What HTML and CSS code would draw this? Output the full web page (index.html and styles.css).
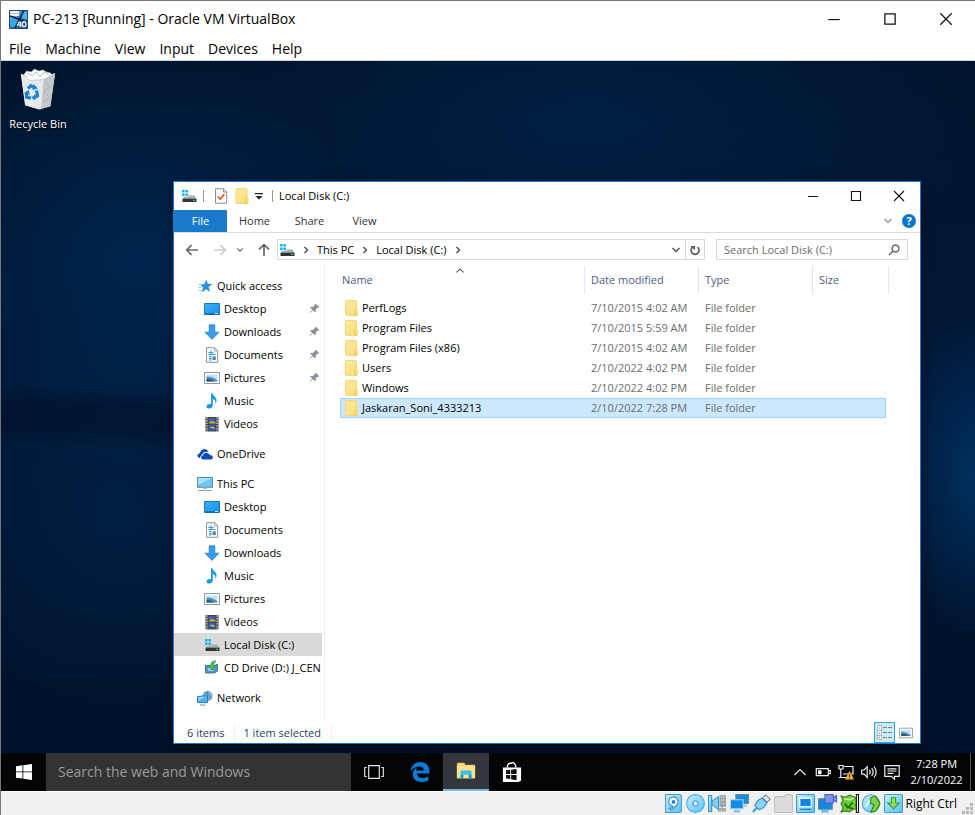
FILE: index.html
```html
<!DOCTYPE html>
<html lang="en">
<head>
<meta charset="utf-8">
<title>PC-213 [Running] - Oracle VM VirtualBox</title>
<link rel="stylesheet" href="styles.css">
</head>
<body>
<svg class="sprite" aria-hidden="true">
  <defs>
    <linearGradient id="g-sky" x1="0" y1="0" x2="1" y2="1"><stop offset="0" stop-color="#39b4f7"/><stop offset="1" stop-color="#1590ea"/></linearGradient>
    <linearGradient id="g-pale" x1="0" y1="0" x2="1" y2="1"><stop offset="0" stop-color="#c4f0ff"/><stop offset="1" stop-color="#55c2fb"/></linearGradient>
    <linearGradient id="g-folder" x1="0" y1="0" x2="1" y2="1"><stop offset="0" stop-color="#ffeaa0"/><stop offset="1" stop-color="#fbdc7c"/></linearGradient>
    <linearGradient id="g-vb" x1="0" y1="0" x2="1" y2="1"><stop offset="0" stop-color="#c8e4f4"/><stop offset=".45" stop-color="#2a8ad0"/><stop offset="1" stop-color="#123a6a"/></linearGradient>
  </defs>
  <symbol id="drive" viewBox="0 0 16 16">
    <path fill="#16b5f2" d="M1 2h2.600v2.600H1zM4.400 2H7v2.600H4.400zM1 5.400h2.600V8H1zM4.400 5.400H7V8H4.400z"/>
    <path fill="#a9adb0" d="M7.500 7.500h6l2 3.500h-14l1.500-2.300h4.500z"/>
    <path fill="#333638" d="M1.500 10.700h14v3.300h-14z"/>
    <path fill="#32d44b" d="M12 11.800h2v1.200h-2z"/>
  </symbol>
  <symbol id="folder" viewBox="0 0 13 16">
    <path fill="url(#g-folder)" stroke="#f3d573" d="M.5 1.500q0-1 1-1h9q1 0 1 1v8l1 1v4q0 1-1 1h-10q-1 0-1-1z"/>
    <path fill="none" stroke="#edc653" d="M12 15.300h-1.500q-.7 0-.7-1v-3.800q0-1 1-1"/>
  </symbol>
  <symbol id="check-doc" viewBox="0 0 14 16">
    <path fill="#fff" stroke="#8c8c8c" d="M1.500.8h8l3.200 3.200v11.200H1.500z"/>
    <path fill="none" stroke="#8c8c8c" d="M9.500 1v3h3"/>
    <path fill="none" stroke="#e8622c" stroke-width="1.800" d="M3.800 8.500l2.400 2.700 4.200-5"/>
  </symbol>
  <symbol id="star" viewBox="0 0 16 16">
    <path fill="#2592e0" d="M9.400 1.500l1.300 4.300 4.700.1-3.800 3 1.700 4.800-4.300-2.400-4.200 3.300 1.200-5.100-3-2.900 4.300-.4z"/>
    <path stroke="#7cc8f5" fill="none" d="M2 6.500h2.500M1.500 9.500h2.500M1.500 12.500h3"/>
  </symbol>
  <symbol id="desktop" viewBox="0 0 16 16">
    <path fill="url(#g-sky)" stroke="#1679c4" d="M.5 2.500h15v11H.5z"/>
    <path stroke="#0d5d9e" d="M1 12.900h14"/><path stroke="#c8ecff" d="M11 12.500h3"/>
  </symbol>
  <symbol id="down" viewBox="0 0 16 16"><path fill="#3b9be8" stroke="#2583d2" stroke-width=".8" d="M5.200.8h5.600v7.400h4.200L8 15.400.9 8.200h4.300z"/></symbol>
  <symbol id="doc" viewBox="0 0 16 16">
    <path fill="#fafafa" stroke="#8f959a" d="M2.500.7h8.200l3 3v11.600H2.500z"/><path fill="none" stroke="#8f959a" stroke-width=".8" d="M10.500 1v3h3"/>
    <path stroke="#2f97da" d="M4.500 5.500h5M4.500 7.500h7M5 9.500h2.500M5 11.500h2.500M5 13h2.500M7 3.500v4"/><path fill="#4a86b0" d="M8.500 9.500h3.300V13H8.500z"/>
  </symbol>
  <symbol id="picture" viewBox="0 0 16 16">
    <path fill="#fff" stroke="#8f959a" d="M.5 2.500h15v11H.5z"/><path fill="#bfe3fb" d="M2.500 4.500h11v4h-11z"/>
    <path fill="#4d8fc6" d="M2.500 6.500q5-.5 11 3.500v1.500h-11z"/><path fill="#2b5a56" d="M2.500 9q5-.5 8 2.500h-8z"/>
  </symbol>
  <symbol id="music" viewBox="0 0 16 16"><path fill="#1a96ea" d="M7 .5h1.800c.3 2.900 4.700 3.900 3.700 8.100-.3 1-.8 1.800-1.300 2.300.7-2.500-.2-4.200-2.400-5v6.300c0 2.100-1.900 3.400-3.900 3.300-1.700-.1-2.600-1.100-2.400-2.300.2-1.700 2.400-2.700 4.500-2z"/></symbol>
  <symbol id="video" viewBox="0 0 16 16">
    <path fill="#454545" d="M1.500 1h13v14.500h-13z"/><path stroke="#e5e5e5" stroke-width="1.300" stroke-dasharray="1.300 1.300" d="M2.900 1.500v14M13.100 1.500v14"/>
    <path fill="#2c5fb0" d="M4.500 2h7v5.500h-7z"/><path fill="#d8a52c" d="M5 6.500l3-1.500 3.500 1v1.500H5z"/><path fill="#c94a2e" d="M6 3h2v2H6z"/>
    <path fill="#2c5fb0" d="M4.500 8.700h7v5.800h-7z"/><path fill="#e0b440" d="M5 11.500l3-1 2.500 1v1.500L8 12.200z"/>
  </symbol>
  <symbol id="cloud" viewBox="0 0 16 16">
    <path fill="#0b4cb8" d="M3 12Q-.3 11.700.5 9.200 1 7.300 3 7.300 3.300 4 6.500 3.200q3.600-.7 5 2.600-5.300-.6-6.700 3.300Q3 10 3 12z"/>
    <path fill="#0b4cb8" d="M6 13.500q-2.200-.2-2-2.200.3-1.500 1.800-1.700Q6.500 6.700 9.300 6.700q2.400 0 3.400 2.400 3.200.2 3.200 2.400 0 2-2.300 2z"/>
  </symbol>
  <symbol id="pc" viewBox="0 0 16 16">
    <path fill="#6cc5f5" stroke="#5a8cae" d="M.5 1.500h15v9.800H.5z"/><path fill="#a8e0fc" d="M1 2h14L1 9z"/>
    <path fill="#8fa5b3" d="M6 11.500h4v1.200H6z"/><path stroke="#98a6b0" d="M1 14.500h14"/>
  </symbol>
  <symbol id="cd" viewBox="0 0 16 16">
    <path fill="#5b93c9" stroke="#46719c" d="M1.500 5.500h9l3-1.500v7l-3 2h-9z"/><path fill="#94c4e8" d="M4 8h5v3H4z"/>
    <path fill="#3cc04f" stroke="#218c33" stroke-width=".6" d="M12 1q-5-.8-5.400 4.600H4.300L8 10l3.700-4.400H9.500Q9.500 2.500 12 1z"/>
  </symbol>
  <symbol id="network" viewBox="0 0 16 16">
    <circle cx="10.500" cy="6" r="5.200" fill="#7fb2d2"/><path fill="none" stroke="#4b7fa5" d="M8 2q4 2 6 7M11 1q-2 4 0 9"/>
    <path fill="#46b3f0" stroke="#2f7fae" d="M.5 6.500l10-.8v7l-10-.2z"/><path fill="#8bd4fb" d="M1 7l8-.6L1 11z"/><path stroke="#78909c" d="M3 15h5"/>
  </symbol>
  <symbol id="pin" viewBox="0 0 12 12"><path fill="#87939b" d="M7.400.8l3.900 3.900-1.200.5-.5-.3-2.300 2.300.2 2.100-1 .8-2.300-2.300L1 11l-.5-.3 3-3.400L1.300 5l.8-.9 2.100.2 2.400-2.400-.1-.4z"/></symbol>
  <symbol id="chev-down" viewBox="0 0 10 10"><path fill="none" stroke="currentColor" stroke-width="1.500" d="M1.500 3L5 6.500 8.500 3"/></symbol>
  <symbol id="chev-right" viewBox="0 0 10 10"><path fill="none" stroke="currentColor" stroke-width="1.500" d="M3.500 2l3 3-3 3"/></symbol>
  <symbol id="chev-up" viewBox="0 0 10 10"><path fill="none" stroke="currentColor" stroke-width="1.200" d="M1 7l4-3.500L9 7"/></symbol>
  <symbol id="arrow" viewBox="0 0 14 14"><path fill="none" stroke="currentColor" stroke-width="1.700" d="M13 7H2M6.500 2L1.700 7l4.800 5"/></symbol>
  <symbol id="min" viewBox="0 0 14 14"><path stroke="#111" d="M2 7.500h10"/></symbol>
  <symbol id="max" viewBox="0 0 14 14"><path fill="none" stroke="#111" stroke-width="1.100" d="M2.500 2.500h9v9h-9z"/></symbol>
  <symbol id="close" viewBox="0 0 14 14"><path stroke="#111" stroke-width="1.100" d="M2 2l10 10M12 2L2 12"/></symbol>
</svg>

<div class="vm">
  <header class="vm-title">
    <svg class="vm-logo" viewBox="0 0 19 19" aria-hidden="true">
      <path fill="url(#g-vb)" stroke="#234763" d="M.5.5h18v18H.5z"/>
      <path fill="#eef6fa" d="M1 1h9v5H1z"/><path stroke="#6b8595" stroke-dasharray="1 1" d="M1.500 3.500h7"/>
      <path fill="#35a9ee" d="M2 8l7 2-3 7H2z"/><path fill="#4fb4ee" d="M15 2h3v8l-5-2z"/>
      <path stroke="#0b223c" stroke-width="1.600" d="M14.500 1L6 18M1 6l17 6"/>
      <path fill="none" stroke="#fff" stroke-width="1.200" d="M10.500 11.500l-2 3.500h4M11.500 12v5"/><ellipse cx="15.200" cy="14.300" rx="1.800" ry="2.700" fill="none" stroke="#fff" stroke-width="1.200"/>
    </svg>
    <h1>PC-213 [Running] - Oracle VM VirtualBox</h1>
    <div class="win-buttons vm-buttons">
      <button aria-label="Minimize"><svg><use href="#min"/></svg></button>
      <button aria-label="Maximize"><svg><use href="#max"/></svg></button>
      <button aria-label="Close"><svg><use href="#close"/></svg></button>
    </div>
  </header>
  <nav class="vm-menu" aria-label="Menu">
    <button>File</button><button>Machine</button><button>View</button><button>Input</button><button>Devices</button><button>Help</button>
  </nav>

  <main class="desktop">
    <a class="recycle" href="#">
      <svg viewBox="0 0 40 44" aria-hidden="true">
        <path fill="#dce1e4" d="M2 5l9 4h15l12-5-5 35-12 3.500L6.500 38z"/>
        <path fill="#c2c8cc" d="M26 9l12-5-5 35-10 3z"/>
        <path fill="#e6eaec" d="M2 5l9 4h15l-3 33.500L6.500 38z"/>
        <path fill="#f9fafa" stroke="#b5bcc1" stroke-width=".6" d="M5 6l3-4 5 1 3-3 5 2 4-1 4 2 4 1 2 2-9 5-15 1z"/>
        <path fill="none" stroke="#a4adb3" stroke-width=".8" d="M9 4l5 3 4-4 4 5 5-5 4 3M27 13l6 6-7 4 6 7-8 5"/>
        <g fill="none" stroke="#1b83d8" stroke-width="3.400"><path d="M9.500 20.500l3-3 4 2"/><path d="M18.500 22.500l1 5.500-3 2"/><path d="M12.500 30.500l-4.500-1 0-5"/></g>
        <path fill="#1b83d8" d="M15.500 16l4.500 4.500-6 1.500zM17 26.500v6.500l-4-3zM5 25.500l5-3.500 1.500 5z"/>
      </svg>
      <span>Recycle Bin</span>
    </a>

    <section class="explorer" aria-label="Local Disk (C:)">
      <header class="ex-title">
        <svg class="i16"><use href="#drive"/></svg><i class="bar"></i>
        <button aria-label="Properties"><svg class="i16"><use href="#check-doc"/></svg></button>
        <button aria-label="New folder"><svg class="i16"><use href="#folder"/></svg></button>
        <button aria-label="Customize" class="qa"><svg viewBox="0 0 8 8"><path fill="#222" d="M0 1h8v1.300H0zM.5 4h7L4 7.500z"/></svg></button>
        <i class="bar"></i>
        <h2>Local Disk (C:)</h2>
        <div class="win-buttons ex-buttons">
          <button aria-label="Minimize"><svg><use href="#min"/></svg></button>
          <button aria-label="Maximize"><svg><use href="#max"/></svg></button>
          <button aria-label="Close"><svg><use href="#close"/></svg></button>
        </div>
      </header>
      <nav class="ribbon" aria-label="Ribbon">
        <button class="file">File</button><button>Home</button><button>Share</button><button>View</button>
        <button class="expand" aria-label="Expand ribbon"><svg class="i10"><use href="#chev-down"/></svg></button>
        <button class="help" aria-label="Help">?</button>
      </nav>
      <div class="nav-row">
        <div class="arrows">
          <button aria-label="Back"><svg><use href="#arrow"/></svg></button>
          <button aria-label="Forward" class="fwd"><svg><use href="#arrow"/></svg></button>
          <button aria-label="Recent"><svg class="i8"><use href="#chev-down"/></svg></button>
          <button aria-label="Up" class="up"><svg><use href="#arrow"/></svg></button>
        </div>
        <div class="address">
          <svg class="i16"><use href="#drive"/></svg>
          <svg class="i10"><use href="#chev-right"/></svg><a href="#">This PC</a>
          <svg class="i10"><use href="#chev-right"/></svg><a href="#">Local Disk (C:)</a>
          <svg class="i10"><use href="#chev-right"/></svg>
          <button class="drop" aria-label="Previous locations"><svg class="i10"><use href="#chev-down"/></svg></button>
          <button class="refresh" aria-label="Refresh"><svg viewBox="0 0 12 12"><path fill="none" stroke="currentColor" stroke-width="1.600" d="M3.500 3.300A4 4 0 1 0 8.500 3.200M2 2.700h3.300v3"/></svg></button>
        </div>
        <div class="find">
          <input type="text" aria-label="Search Local Disk (C:)" placeholder="Search Local Disk (C:)">
          <svg viewBox="0 0 12 12" aria-hidden="true"><circle cx="7.500" cy="4.500" r="3.400"/><path d="M5 7L1 11"/></svg>
        </div>
      </div>

      <div class="body">
        <nav class="tree" aria-label="Folders">
          <ul>
            <li class="root"><svg class="i16"><use href="#star"/></svg><a href="#">Quick access</a></li>
            <li><svg class="i16"><use href="#desktop"/></svg><a href="#">Desktop</a><svg class="pin"><use href="#pin"/></svg></li>
            <li><svg class="i16"><use href="#down"/></svg><a href="#">Downloads</a><svg class="pin"><use href="#pin"/></svg></li>
            <li><svg class="i16"><use href="#doc"/></svg><a href="#">Documents</a><svg class="pin"><use href="#pin"/></svg></li>
            <li><svg class="i16"><use href="#picture"/></svg><a href="#">Pictures</a><svg class="pin"><use href="#pin"/></svg></li>
            <li><svg class="i16"><use href="#music"/></svg><a href="#">Music</a></li>
            <li><svg class="i16"><use href="#video"/></svg><a href="#">Videos</a></li>
          </ul>
          <ul><li class="root"><svg class="i16"><use href="#cloud"/></svg><a href="#">OneDrive</a></li></ul>
          <ul>
            <li class="root"><svg class="i16"><use href="#pc"/></svg><a href="#">This PC</a></li>
            <li><svg class="i16"><use href="#desktop"/></svg><a href="#">Desktop</a></li>
            <li><svg class="i16"><use href="#doc"/></svg><a href="#">Documents</a></li>
            <li><svg class="i16"><use href="#down"/></svg><a href="#">Downloads</a></li>
            <li><svg class="i16"><use href="#music"/></svg><a href="#">Music</a></li>
            <li><svg class="i16"><use href="#picture"/></svg><a href="#">Pictures</a></li>
            <li><svg class="i16"><use href="#video"/></svg><a href="#">Videos</a></li>
            <li class="current"><svg class="i16"><use href="#drive"/></svg><a href="#">Local Disk (C:)</a></li>
            <li><svg class="i16"><use href="#cd"/></svg><a href="#">CD Drive (D:) J_CEN</a></li>
          </ul>
          <ul><li class="root"><svg class="i16"><use href="#network"/></svg><a href="#">Network</a></li></ul>
        </nav>
        <div class="files">
          <table>
            <thead><tr><th class="name">Name<svg class="sort"><use href="#chev-up"/></svg></th><th class="date">Date modified</th><th class="type">Type</th><th class="size">Size</th></tr></thead>
            <tbody>
              <tr><td><svg class="fi"><use href="#folder"/></svg>PerfLogs</td><td>7/10/2015 4:02 AM</td><td>File folder</td><td></td></tr>
              <tr><td><svg class="fi"><use href="#folder"/></svg>Program Files</td><td>7/10/2015 5:59 AM</td><td>File folder</td><td></td></tr>
              <tr><td><svg class="fi"><use href="#folder"/></svg>Program Files (x86)</td><td>7/10/2015 4:02 AM</td><td>File folder</td><td></td></tr>
              <tr><td><svg class="fi"><use href="#folder"/></svg>Users</td><td>2/10/2022 4:02 PM</td><td>File folder</td><td></td></tr>
              <tr><td><svg class="fi"><use href="#folder"/></svg>Windows</td><td>2/10/2022 4:02 PM</td><td>File folder</td><td></td></tr>
              <tr class="selected"><td><svg class="fi"><use href="#folder"/></svg>Jaskaran_Soni_4333213</td><td>2/10/2022 7:28 PM</td><td>File folder</td><td></td></tr>
            </tbody>
          </table>
        </div>
      </div>
      <footer class="ex-status">
        <span>6 items</span><span>1 item selected</span>
        <div class="views">
          <button class="on" aria-label="Details view"><svg viewBox="0 0 17 15"><path fill="#fff" stroke="#a9b6be" d="M1.500.5h4v14h-4z"/><path stroke="#a9b6be" d="M1 5.500h5M1 10.500h5"/><path fill="#4b7d45" d="M3 2.500h1v1H3z"/><path fill="#3f6fb0" d="M3 7.500h1v1H3z"/><path fill="#d33" d="M3 12h1v1H3z"/><path stroke="#6e8795" stroke-dasharray="4 1" d="M7 2.500h9M7 7.500h9M7 12.500h9"/></svg></button>
          <button aria-label="Large icons"><svg class="pic"><use href="#picture"/></svg></button>
        </div>
      </footer>
    </section>
  </main>

  <footer class="taskbar">
    <button class="start" aria-label="Start"><svg viewBox="0 0 16 16"><path fill="#fff" d="M0 2.300l6.500-1v6.200H0zM7.300 1.200L16 0v7.500H7.300zM0 8.300h6.500v6.300L0 13.700zM7.300 8.300H16V16l-8.700-1.300z"/></svg></button>
    <input class="web" type="text" aria-label="Search the web and Windows" placeholder="Search the web and Windows">
    <button class="task" aria-label="Task view"><svg viewBox="0 0 20 20"><path fill="none" stroke="#ddd" stroke-width="1.200" d="M4.700 3.600h10.600v12.800H4.700zM2.800 5.500H.7v9h2.100M17.200 5.500h2.100v9h-2.100"/></svg></button>
    <button class="task" aria-label="Edge"><svg viewBox="0 0 20 20"><path fill="#0c7bd8" d="M.5 9.300C1.200 3.700 5 0 10.300 0 16 0 19.500 4 19.500 9.500v2H7c.2 3 2.500 4.600 5.800 4.600 2.100 0 3.900-.6 5.500-1.500v4c-1.700 1-4 1.400-6.300 1.400-6 0-9.200-3.100-9.200-7.800 0-3 1.700-5.500 4.600-6.900-.8.9-1.300 1.900-1.400 3.100h7.700c0-2.600-1.300-4-4-4C6 4.400 2.700 6.300.5 9.300z"/></svg></button>
    <button class="task active" aria-label="File Explorer"><svg viewBox="0 0 22 20"><path fill="#efc24b" d="M1 2q0-1 1-1h7l1.500 2H21v15H1z"/><path fill="#fce08a" d="M1 4h20v14H1z"/><path fill="#fff2bf" d="M3 2h5v1H3z"/><path fill="#3dbdf0" d="M5 10.500q0-1 1-1h10q1 0 1 1V18h-3v-4H8v4H5z"/><path fill="#1b9adb" d="M5 14h3v4H5zM14 14h3v4h-3z"/></svg></button>
    <button class="task" aria-label="Store"><svg viewBox="0 0 20 22"><path fill="none" stroke="#fff" stroke-width="1.600" d="M5 6V4q1-3 4-2.500Q12-1 14 4v2"/><path fill="#fff" d="M0 6h20v14.500L17 22H0z"/><path fill="#0a0c10" d="M3.500 9.200l4.500-.6v4.600H3.500zM9 8.500l6-.8v5.500H9zM3.500 14.200H8v4.600l-4.500-.6zM9 14.200h6V20l-6-1z"/></svg></button>
    <div class="tray">
      <svg viewBox="0 0 16 16"><path d="M2.500 11L8 5.500l5.500 5.500"/></svg>
      <svg viewBox="0 0 16 16"><path d="M1.300 4.700h12v7h-12zM14 6.700h1.300v3H14"/><path class="solid" d="M3 6.300h3.500v4H3z"/></svg>
      <svg viewBox="0 0 16 16"><path d="M6 2.500h9v7.500H5M1 1.500h4v3.500H1zM2.800 5v8.500M1 13.500h7"/><path fill="#f7b51b" stroke="none" d="M11.500 7l4.500 8.500H7z"/><path stroke="#222" stroke-width="1.100" d="M11.500 10v2.800M11.500 13.500v1"/></svg>
      <svg viewBox="0 0 16 16"><path d="M.7 6h2.500l3-3.300v10.800l-3-3.300H.7zM8.500 5.800q1.500 2.200 0 4.500M10.700 4q3 4 0 8M13 2.500q4.300 5.500 0 11"/></svg>
      <svg viewBox="0 0 16 16"><path d="M.8 1.700h14.400v10.600H10.500v3l-3-3H.8zM3.500 4.800h9M3.500 7h9M3.500 9.300h6"/></svg>
    </div>
    <div class="clock"><time>7:28 PM</time><time>2/10/2022</time></div>
  </footer>

  <footer class="vm-status">
    <svg viewBox="0 0 18 18"><path fill="url(#g-pale)" stroke="#4a9cc8" d="M1.500.5h13q2 0 2 2v13q0 2-2 2h-13z"/><path fill="#fff" stroke="#3485bd" d="M5 5q3-4 7-1 3 4-1 7.500-1 1.500-4 3.500l-2-1.500q4-.5 3.500-2Q3 10 5 5z"/><circle cx="9" cy="7.500" r="1.800" fill="#1c7fd0"/></svg>
    <svg viewBox="0 0 18 18"><circle cx="9" cy="9" r="8.400" fill="url(#g-pale)" stroke="#4aa9dc"/><circle cx="9" cy="9" r="2.300" fill="#fff" stroke="#3b93ca"/></svg>
    <svg viewBox="0 0 18 18"><path fill="#b7bdc0" stroke="#a0a6aa" d="M11.500 1.500h5v10h-5zM10 14h6.500v2H10z"/><path stroke="#8e969b" d="M11 4.500h6M11 7.500h6M11 10.500h6M13.500 11v4"/><path fill="url(#g-pale)" stroke="#3e91c4" d="M.5 1.500h3v15h-3z"/><path fill="#7fd0fa" stroke="#3e91c4" d="M4 6.500l6-4v12l-6-4z"/></svg>
    <svg viewBox="0 0 18 18"><path fill="#1a8ce0" stroke="#6c8a9c" d="M5.500.5h12v8.500h-12z"/><path fill="#8ac9ea" d="M13 10h3v2h-3z"/><path fill="#138ae4" stroke="#b4d4e6" d="M.5 5.500h12v8.500H.5z"/><path fill="#84c5ea" d="M4 15h5l1 2.500H3z"/></svg>
    <svg viewBox="0 0 18 18"><path fill="#e8eef0" stroke="#7f8c94" d="M13 .8l4.200 4.200-3 2.800L10 3.700z"/><path fill="#8ad4fa" stroke="#3c8bc0" d="M9.500 4l4.700 4.500q-3 5.500-7.500 6.300l-4-3.800Q4 6 9.500 4z"/><path stroke="#3c9fda" stroke-width="2" d="M4.500 13L.8 17.200"/></svg>
    <svg viewBox="0 0 18 18"><path fill="#dcdcdc" stroke="#c0c0c0" d="M.5 3.500q0-1 1-1h8l2-2h4q2 0 2 2v14q0 1-1 1h-15q-1 0-1-1z"/></svg>
    <svg viewBox="0 0 18 18"><path fill="url(#g-pale)" stroke="#4299cc" d="M.5 1.500q0-1 1-1h15q1 0 1 1v15q0 1-1 1h-15q-1 0-1-1z"/><path fill="#0f83df" stroke="#edfaff" stroke-width="1.300" d="M3.500 4h11v8h-11z"/><path stroke="#186cad" d="M4 14.500h10"/></svg>
    <svg viewBox="0 0 18 18"><path fill="#1288e2" stroke="#5787a8" d="M.5 4.500h13v10H.5z"/><path fill="#68bdf0" d="M3.500 15h6l1 2.500h-8z"/><path fill="#7d92e8" stroke="#4a62b8" d="M6.500.5h8v8h-8zM14.500 3.500l3-2v6l-3-1.500z"/></svg>
    <svg viewBox="0 0 18 18"><path fill="#6ccc35" stroke="#2d7c17" d="M1 2l4 1 4-2 5 2 3 4-2 3 1 5-3-1-4 3-4-1-4 1 2-4-2-4 2-3z"/><path fill="none" stroke="#c4f49c" stroke-width="1.500" d="M4 4.500l5 1 4-2"/><path fill="none" stroke="#1d5f0c" stroke-width="1.600" d="M4.500 9l3 4 4.500-5M9 13l3.500 1"/><path fill="#fff" stroke="#111" d="M15.500.5h2v17h-2z"/></svg>
    <svg viewBox="0 0 18 18"><circle cx="8.500" cy="9" r="8.200" fill="url(#g-pale)" stroke="#529fc8"/><path stroke="#fff" stroke-width="1.500" d="M3.500 12l4-6"/><path fill="#7ad83c" stroke="#327f1a" d="M8.500 3.500l4-1.500 4.500 7-4 7.500-4.500.5 3-7-3.500-1z"/></svg>
    <svg viewBox="0 0 18 18"><path fill="url(#g-pale)" stroke="#4a9cc8" d="M.5 1.500q0-1 1-1h15q1 0 1 1v15q0 1-1 1h-15q-1 0-1-1z"/><path fill="#8ee052" stroke="#349338" d="M7 3.500h4v5h3.500L9 14 3.500 8.500H7z"/></svg>
    <span>Right Ctrl</span>
    <svg class="grip" viewBox="0 0 12 12"><path fill="#b9b9b9" d="M8 0h3v3H8zM4 4h3v3H4zM8 4h3v3H8zM0 8h3v3H0zM4 8h3v3H4zM8 8h3v3H8z"/></svg>
  </footer>
</div>
</body>
</html>
```
FILE: styles.css
```css
* { box-sizing: border-box; }
body { margin: 0; font-family: "Open Sans", "Noto Sans", sans-serif; font-size: 11px; line-height: 16px; color: #000; }
button { border: 0; padding: 0; margin: 0; background: none; font: inherit; color: inherit; display: flex; align-items: center; justify-content: center; }
input { font: inherit; border: 0; outline: 0; }
a { color: inherit; text-decoration: none; }
h1, h2 { margin: 0; font-weight: 400; font-size: inherit; }
svg { display: block; flex: none; }
.sprite { position: absolute; width: 0; height: 0; }
.i16 { width: 16px; height: 16px; }
.i10 { width: 10px; height: 10px; }
.i8 { width: 8px; height: 8px; }

.vm { min-height: 100vh; display: flex; flex-direction: column; border-left: 1px solid #777; border-top: 1px solid #777; background: #fff; }

/* Host window */
.vm-title { display: flex; align-items: center; height: 36px; padding: 0 8px; font-size: 14px; }
.vm-logo { width: 19px; height: 19px; margin-right: 5px; }
.win-buttons { display: flex; margin-left: auto; }
.win-buttons svg { width: 14px; height: 14px; }
.vm-buttons { margin-right: -7px; }
.vm-buttons button { width: 56px; height: 34px; }
.vm-buttons svg { width: 16px; height: 16px; }
.vm-menu { display: flex; gap: 14px; height: 24px; padding: 0 8px; font-size: 14px; border-bottom: 1px solid #d0d4da; }

/* Guest desktop */
.desktop {
  position: relative; flex: 1; min-height: 640px; overflow: hidden;
  background:
    linear-gradient(182deg, transparent 47%, rgba(0, 8, 28, .4) 50%, rgba(0, 8, 28, .4) 53%, transparent 56%) left / 190px 100% no-repeat,
    radial-gradient(ellipse 80px 160px at 100% 60%, rgba(0, 66, 124, .6), transparent),
    radial-gradient(ellipse 420px 180px at 60% 8%, rgba(0, 46, 92, .45), transparent),
    radial-gradient(ellipse 220px 220px at 14% 28%, rgba(0, 50, 98, .55), transparent),
    radial-gradient(ellipse 190px 210px at 12% 66%, rgba(0, 44, 84, .45), transparent),
    linear-gradient(#00132b, #001838 45%, #001129);
}
.recycle { position: absolute; left: 0; top: 7px; width: 74px; display: flex; flex-direction: column; align-items: center; gap: 4px; color: #fff; text-shadow: 1px 1px 2px #000; }
.recycle svg { width: 38px; height: 44px; }

/* File explorer window */
.explorer { position: absolute; left: 172px; right: 54px; top: 120px; bottom: 9px; display: flex; flex-direction: column; background: #fff; border: 1px solid #1a7ad0; box-shadow: 0 2px 8px rgba(0, 0, 0, .5); }
.ex-title { display: flex; align-items: center; height: 28px; flex: none; padding-left: 7px; }
.ex-title .bar { width: 1px; height: 12px; background: #999; margin: 0 6px; }
.ex-title button { width: 21px; height: 28px; }
.ex-title .qa { width: 14px; }
.qa svg { width: 8px; height: 8px; }
.ex-title .ex-buttons button { width: 43px; }
.ribbon { display: flex; height: 23px; flex: none; border-bottom: 1px solid #dadbdc; color: #333; }
.ribbon button { width: 55px; }
.ribbon .file { width: 53px; background: #1979ca; color: #fff; }
.ribbon .expand { width: 20px; margin-left: auto; color: #999; }
.ribbon .help { width: 14px; height: 14px; margin: 4px 4px 0 4px; border-radius: 50%; background: #0a74d0; color: #fff; font-weight: 700; }
.nav-row { display: flex; align-items: center; flex: none; padding: 6px 12px 6px 11px; }
.arrows { display: flex; width: 92px; gap: 9px; color: #666; align-items: center; }
.arrows svg { width: 14px; height: 14px; }
.arrows .i8 { width: 8px; height: 8px; }
.arrows .fwd { transform: scaleX(-1); color: #ccc; margin-left: 5px; }
.arrows .up { transform: rotate(90deg); margin-left: 4px; }
.address { display: flex; align-items: center; gap: 6px; flex: 1; height: 21px; border: 1px solid #d9d9d9; padding-left: 1px; color: #555; }
.address a { color: #000; }
.address .drop { margin-left: auto; width: 10px; }
.address .refresh { width: 19px; height: 19px; border-left: 1px solid #d9d9d9; margin-left: -2px; }
.refresh svg { width: 12px; height: 12px; }
.find { display: flex; align-items: center; width: 192px; height: 21px; margin-left: 11px; padding: 0 7px; border: 1px solid #d9d9d9; }
.find input { flex: 1; min-width: 0; padding: 0; background: none; }
.find input::placeholder { color: #6d6d6d; opacity: 1; }
.find svg { width: 12px; height: 12px; fill: none; stroke: #666; stroke-width: 1.5; }

.body { display: flex; flex: 1; min-height: 0; }
.tree { width: 151px; flex: none; padding: 8px 2px 0 0; border-right: 1px solid #eee; overflow: hidden; }
.tree ul { list-style: none; margin: 0 0 7px; padding: 0; }
.tree li { display: flex; align-items: center; height: 23px; gap: 4px; padding-left: 30px; white-space: nowrap; }
.tree .root { padding-left: 23px; }
.tree .current { background: #d9d9d9; }
.pin { width: 11px; height: 11px; margin: 0 2px 0 auto; }
.files { flex: 1; padding: 0 31px 0 15px; }
table { width: 100%; table-layout: fixed; border-spacing: 0; }
th { position: relative; height: 28px; padding: 0 0 0 6px; font-weight: 400; text-align: left; color: #4c607a; border-right: 1px solid #e5e5e5; }
thead::after { content: ""; display: block; height: 4px; }
th.name { padding-left: 2px; }
th.date, th.type { width: 114px; }
th.size { width: 76px; }
.sort { position: absolute; left: 50%; top: 0; width: 10px; height: 9px; margin-left: -7px; color: #555; }
td { height: 20px; padding: 0 0 0 6px; color: #6d6d6d; white-space: nowrap; background-clip: padding-box; }
td:first-child { display: flex; align-items: center; gap: 4px; padding-left: 5px; color: #000; }
td:last-child { border-right: 3px solid transparent; }
.fi { width: 13px; height: 16px; }
.selected td { background-color: #cce8ff; box-shadow: inset 0 1px #99d1ff, inset 0 -1px #99d1ff; }
.selected td:first-child { box-shadow: inset 1px 0 #99d1ff, inset 0 1px #99d1ff, inset 0 -1px #99d1ff; }
.selected td:last-child { box-shadow: inset -1px 0 #99d1ff, inset 0 1px #99d1ff, inset 0 -1px #99d1ff; }
.ex-status { display: flex; align-items: center; height: 21px; flex: none; padding-left: 13px; color: #2b4260; }
.ex-status span { padding-right: 10px; margin-right: 8px; border-right: 1px solid #eee; }
.views { display: flex; align-self: stretch; margin-left: auto; gap: 2px; padding-right: 6px; }
.views button { width: 17px; }
.views .on { width: 21px; background: #cdeaf9; border: 1px solid #35a2dd; }
.views svg { width: 17px; height: 15px; }
.views .pic { width: 14px; height: 14px; }

/* Guest taskbar */
.taskbar { display: flex; height: 38px; flex: none; background: #030406; color: #fff; }
.start { width: 45px; }
.start svg { width: 16px; height: 16px; }
.web { width: 305px; padding: 0 12px; background: #333; color: #fff; font-size: 14px; }
.web::placeholder { color: #999; opacity: 1; }
.task { width: 46px; }
.task svg { width: 20px; height: 20px; }
.active { background: #33363c; border-bottom: 2px solid #76b9ed; }
.tray { display: flex; align-items: center; gap: 7px; margin-left: auto; }
.tray svg { width: 16px; height: 16px; fill: none; stroke: #eee; stroke-width: 1.2; }
.tray .solid { fill: #fff; stroke: none; }
.clock { display: flex; flex-direction: column; justify-content: center; width: 71px; margin-right: 4px; padding-left: 3px; border-right: 1px solid #555; text-align: center; }

/* Host status bar */
.vm-status { display: flex; align-items: center; justify-content: flex-end; gap: 3px; height: 24px; flex: none; padding-right: 1px; background: #f0f0f0; border-top: 1px solid #fff; }
.vm-status svg { width: 19px; height: 19px; }
.vm-status span { font-size: 12px; }
.vm-status .grip { width: 12px; height: 12px; align-self: flex-end; margin-left: 2px; }
```
